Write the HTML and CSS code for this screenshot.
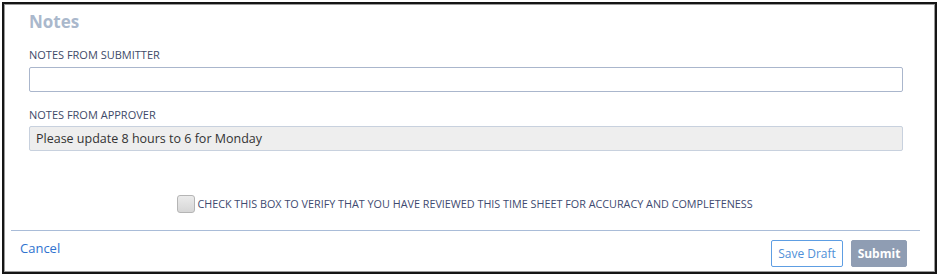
FILE: index.html
```html
<!DOCTYPE html>
<html>
<head>
<meta charset="utf-8">
<link rel="stylesheet" href="styles.css">
</head>
<body>
<div class="frame">
  <div class="section">
    <h2 class="title">Notes</h2>
    <label class="label">NOTES FROM SUBMITTER</label>
    <div class="field"></div>
    <label class="label second">NOTES FROM APPROVER</label>
    <div class="field readonly">Please update 8 hours to 6 for Monday</div>
    <div class="verify">
      <span class="checkbox"></span>
      <span class="verify-text">CHECK THIS BOX TO VERIFY THAT YOU HAVE REVIEWED THIS TIME SHEET FOR ACCURACY AND COMPLETENESS</span>
    </div>
  </div>
  <div class="footer">
    <a class="cancel">Cancel</a>
    <div class="actions">
      <button class="btn draft">Save Draft</button>
      <button class="btn submit">Submit</button>
    </div>
  </div>
</div>
</body>
</html>
```

FILE: styles.css
```css
html, body {
  margin: 0;
  padding: 0;
  background: #ffffff;
  font-family: "Open Sans", "Liberation Sans", sans-serif;
}
.frame {
  margin: 2px;
  width: 935px;
  height: 272px;
  box-sizing: border-box;
  border: 2px solid #151515;
  box-shadow: inset 0 0 0 1px #9a9a9a;
  background: #fff;
  display: flex;
  flex-direction: column;
}
.section {
  padding: 7px 32px 0 25px;
  display: flex;
  flex-direction: column;
}
.title {
  margin: 0;
  font-size: 17px;
  font-weight: 700;
  color: #aab8cc;
  line-height: 22px;
  height: 22px;
}
.label {
  display: block;
  font-size: 11px;
  color: #3e4a68;
  line-height: 14px;
  margin-top: 15px;
  height: 14px;
}
.label.second {
  margin-top: 16px;
}
.field {
  margin-top: 5px;
  height: 25px;
  box-sizing: border-box;
  border: 1px solid #aab6cc;
  border-radius: 2px;
  background: #fff;
}
.field.readonly {
  margin-top: 4px;
  background: #eeeeee;
  border-color: #c8d1de;
  font-size: 12.5px;
  color: #333;
  line-height: 23px;
  padding-left: 6px;
}
.verify {
  margin-top: 44px;
  display: flex;
  align-items: center;
  justify-content: center;
  padding-right: 2px;
}
.checkbox {
  width: 16px;
  height: 16px;
  border: 1px solid #b5b5b5;
  border-radius: 3px;
  background: linear-gradient(#ebebeb, #d6d6d6);
  margin-right: 2px;
}
.verify-text {
  font-size: 10.8px;
  color: #3e4a70;
  line-height: 14px;
}
.footer {
  margin: 17px 15px 0 7px;
  border-top: 1px solid #a9bcd8;
  display: flex;
  justify-content: space-between;
  align-items: flex-start;
  padding: 9px 13px 0 9px;
}
.cancel {
  font-size: 13px;
  color: #2f72cf;
  line-height: 16px;
  margin-top: 0;
}
.actions {
  display: flex;
  gap: 8px;
}
.btn {
  font-family: "Open Sans", "Liberation Sans", sans-serif;
  font-size: 12px;
  height: 27px;
  border-radius: 2px;
  box-sizing: border-box;
  padding: 0;
  cursor: pointer;
}
.draft {
  width: 72px;
  background: #fff;
  border: 1px solid #5e9ee3;
  color: #4f8fd8;
}
.submit {
  width: 56px;
  background: #8f9db3;
  border: 1px solid #8f9db3;
  color: #fff;
  font-weight: 700;
}
```
